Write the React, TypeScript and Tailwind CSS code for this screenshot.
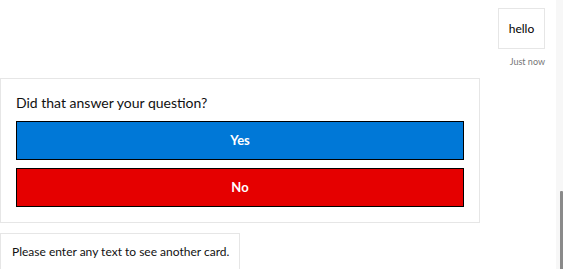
export default function App() {
    return (
        <div className="flex h-[269px] w-[563px] overflow-hidden bg-white font-['Lato','Noto_Sans',sans-serif] text-[#000]">
            <div className="flex flex-1 flex-col">
                <div className="flex flex-col items-end pr-[11px] pt-2">
                    <div className="flex h-[41px] w-[47px] items-center justify-center border border-[#e6e6e6] text-[12px]">
                        hello
                    </div>
                    <span className="mt-[7px] text-[9px] leading-[12px] text-[#767676]">Just now</span>
                </div>

                <div className="mt-[10px] flex w-[480px] flex-col border border-[#e6e6e6] px-[15px] pb-[15px] pt-[14px]">
                    <p className="text-[14px] leading-[20px] text-[#111]">Did that answer your question?</p>
                    <button className="mt-[8px] h-[39px] w-full border border-black bg-[#0078d7] text-[13px] font-bold text-white">
                        Yes
                    </button>
                    <button className="mt-[8px] h-[39px] w-full border border-black bg-[#e50000] text-[13px] font-bold text-white">
                        No
                    </button>
                </div>

                <div className="mt-[10px] w-[240px] border border-[#e6e6e6] px-[11px] pb-[12px] pt-[10px]">
                    <p className="whitespace-nowrap text-[12px] leading-[16px] text-[#111]">Please enter any text to see another card.</p>
                </div>
            </div>

            <div className="flex w-[7px] flex-col items-end bg-[#f7f7f7] pt-[191px]">
                <div className="w-[3px] flex-1 rounded-t-[1px] bg-[#8a8a8a]"/>
            </div>
        </div>
    );
}
